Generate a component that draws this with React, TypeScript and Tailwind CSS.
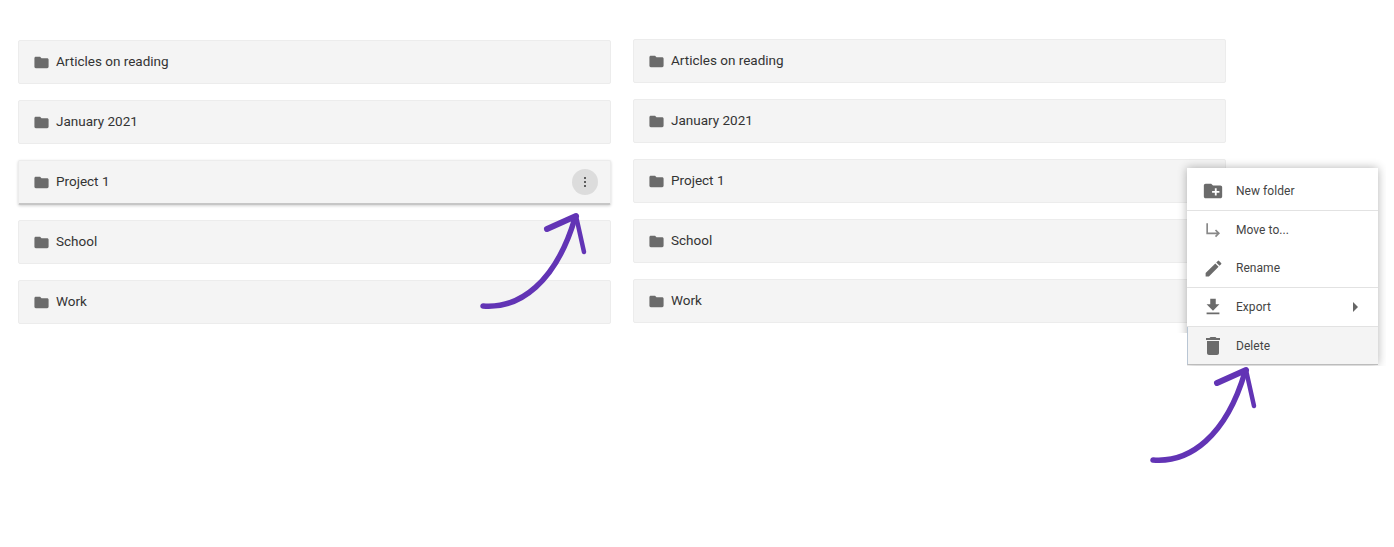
import type { ReactNode } from 'react'

const folders = ['Articles on reading', 'January 2021', 'Project 1', 'School', 'Work']

function FolderIcon() {
  return (
    <svg viewBox="0 0 24 24" className="h-[17px] w-[17px] shrink-0 fill-[#6b6b6b]">
      <path d="M10 4H4c-1.1 0-2 .9-2 2v12c0 1.1.9 2 2 2h16c1.1 0 2-.9 2-2V8c0-1.1-.9-2-2-2h-8l-2-2z" />
    </svg>
  )
}

function Arrow() {
  return (
    <svg viewBox="0 0 110 100" className="h-[100px] w-[110px] fill-none stroke-[#6234b5]" strokeLinecap="round" strokeLinejoin="round">
      <path d="M3 94C40 97 76 70 95 6" strokeWidth="5.5" />
      <path d="M67 17L96 4" strokeWidth="6" />
      <path d="M96 4L104 40" strokeWidth="4.5" />
    </svg>
  )
}

function FolderRow({ name, active }: { name: string; active?: boolean }) {
  return (
    <div
      className={
        'flex items-center justify-between rounded-[2px] border border-[#ececec] bg-[#f4f4f4] pl-[14px] pr-[12px] ' +
        (active ? 'h-[45px] border-b-2 border-b-[#c6c6c6] shadow-[0_1px_3px_rgba(0,0,0,0.18)]' : 'h-[44px]')
      }
    >
      <div className="flex items-center gap-[6px]">
        <FolderIcon />
        <span className="-mt-[2px] text-[13.5px] text-[#333333]">{name}</span>
      </div>
      {active && (
        <div className="flex h-[26px] w-[26px] flex-col items-center justify-center gap-[2px] rounded-full bg-[#dcdcdc]">
          <span className="h-[2px] w-[2px] rounded-full bg-[#333333]" />
          <span className="h-[2px] w-[2px] rounded-full bg-[#333333]" />
          <span className="h-[2px] w-[2px] rounded-full bg-[#333333]" />
        </div>
      )}
    </div>
  )
}

function MenuItem({ icon, label, h, hover, sub }: { icon: ReactNode; label: string; h: string; hover?: boolean; sub?: boolean }) {
  return (
    <div className={'flex items-center pr-[20px] ' + h + (hover ? ' border-b border-l border-b-[#bcbcbc] border-l-[#b9c6d4] bg-[#f4f4f4] pl-[15px]' : ' pl-[16px]')}>
      <div className="flex w-[33px] shrink-0 items-center">{icon}</div>
      <span className="flex-1 text-[12px] tracking-[0.05px] text-[#444444]">{label}</span>
      {sub && <div className="h-0 w-0 border-y-[5px] border-l-[5px] border-y-transparent border-l-[#666666]" />}
    </div>
  )
}

function Menu() {
  return (
    <div className="absolute left-[1177px] top-[158px] h-[208px] w-[209px] overflow-hidden p-[10px] pr-[8px]">
      <div className="w-[191px] bg-white shadow-[0_0_9px_rgba(0,0,0,0.3)]">
        <MenuItem
          h="h-[42px] pt-[3px]"
          label="New folder"
          icon={
            <svg viewBox="0 0 24 24" className="-ml-[1px] h-[22px] w-[22px] fill-[#6b6b6b]">
              <path d="M20 6h-8l-2-2H4c-1.11 0-2 .89-2 2v12c0 1.11.89 2 2 2h16c1.11 0 2-.89 2-2V8c0-1.11-.89-2-2-2zm-1 8h-3v3h-2v-3h-3v-2h3V9h2v3h3v2z" />
            </svg>
          }
        />
        <div className="h-px bg-[#e2e2e2]" />
        <MenuItem
          h="h-[38px]"
          label="Move to..."
          icon={
            <svg viewBox="0 0 24 24" className="h-[20px] w-[20px] fill-none stroke-[#888888]" strokeWidth="2">
              <path d="M5 4v12h14M15 12l4 4-4 4" />
            </svg>
          }
        />
        <MenuItem
          h="h-[38px]"
          label="Rename"
          icon={
            <svg viewBox="0 0 24 24" className="h-[21px] w-[21px] fill-[#6b6b6b]">
              <path d="M3 17.25V21h3.75L17.81 9.94l-3.75-3.75L3 17.25zM20.71 7.04a1 1 0 0 0 0-1.41l-2.34-2.34a1 1 0 0 0-1.41 0l-1.83 1.83 3.75 3.75 1.83-1.83z" />
            </svg>
          }
        />
        <div className="h-px bg-[#e2e2e2]" />
        <MenuItem
          h="h-[38px]"
          label="Export"
          sub
          icon={
            <svg viewBox="0 0 24 24" className="-ml-[1px] h-[22px] w-[22px] fill-[#6b6b6b]">
              <path d="M19 9h-4V3H9v6H5l7 7 7-7zM5 18v2h14v-2H5z" />
            </svg>
          }
        />
        <div className="h-px bg-[#e2e2e2]" />
        <MenuItem
          h="h-[38px]"
          label="Delete"
          hover
          icon={
            <svg viewBox="0 0 24 24" className="-ml-[2px] h-[24px] w-[24px] fill-[#6b6b6b]">
              <path d="M6 19c0 1.1.9 2 2 2h8c1.1 0 2-.9 2-2V7H6v12zM19 4h-3.5l-1-1h-5l-1 1H5v2h14V4z" />
            </svg>
          }
        />
      </div>
      {/* shadow stops short on the left beside Delete */}
      <div className="absolute left-0 top-[175px] h-[33px] w-[10px] bg-white" />
    </div>
  )
}

export default function App() {
  return (
    <div className="relative h-[547px] w-[1394px] overflow-hidden bg-white font-['Roboto',sans-serif]">
      <div className="flex items-start gap-[22px] pl-[18px]">
        <div className="flex w-[593px] flex-col pt-[40px]">
          {folders.map((f) => (
            <div key={f} className="pb-[16px] last:pb-0 [&:nth-child(3)]:pb-[15px]">
              <FolderRow name={f} active={f === 'Project 1'} />
            </div>
          ))}
        </div>
        <div className="flex w-[593px] flex-col gap-[16px] pt-[39px]">
          {folders.map((f) => (
            <FolderRow key={f} name={f} />
          ))}
        </div>
      </div>
      <Menu />
      <div className="absolute left-[480px] top-[212px]">
        <Arrow />
      </div>
      <div className="absolute left-[1150px] top-[366px]">
        <Arrow />
      </div>
    </div>
  )
}
